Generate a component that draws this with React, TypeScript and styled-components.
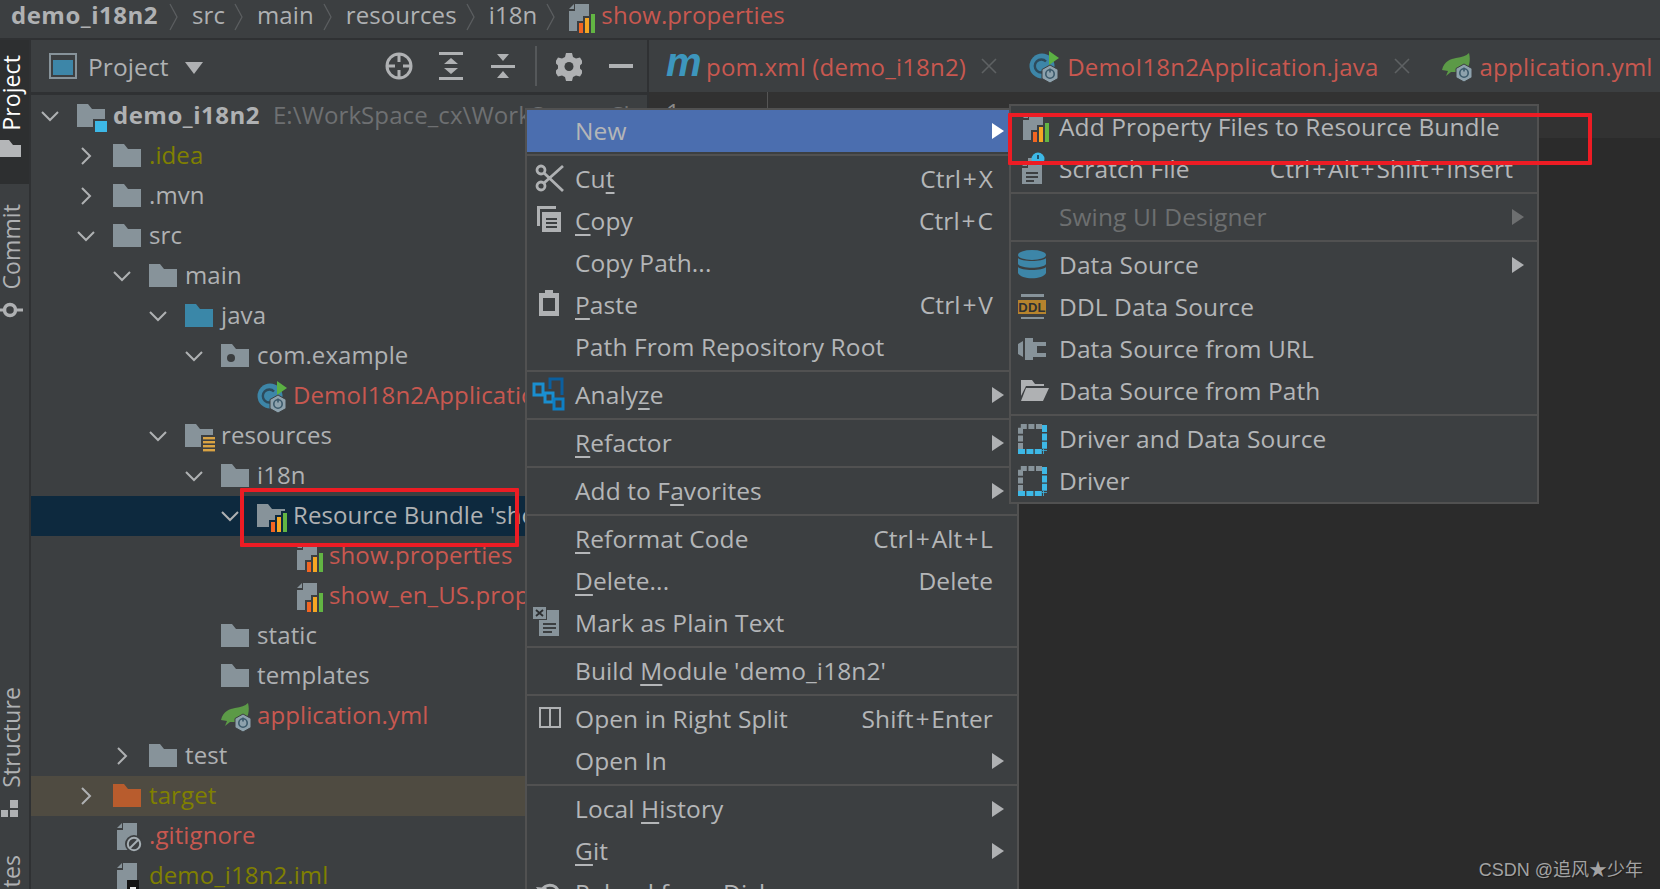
import React from 'react';
import styled, { createGlobalStyle } from 'styled-components';

const GlobalStyle = createGlobalStyle`
  html, body {
    margin: 0;
    padding: 0;
    background: #2b2b2b;
  }
  * {
    box-sizing: border-box;
  }
`;

const UI_FONT = `"Open Sans", "Noto Sans", sans-serif`;
const TEXT = '#afb1b3';
const RED = '#c85850';
const OLIVE = '#808000';
const BAR = '#3c3f41';
const LINE = '#2f3133';
const GREY_ICON = '#87939a';

// Shell
const Window = styled.div`
  position: relative;
  width: 1660px;
  height: 889px;
  overflow: hidden;
  display: flex;
  flex-direction: column;
  background: ${BAR};
  color: ${TEXT};
  font-family: ${UI_FONT};
  font-size: 24.5px;
  letter-spacing: 0.1px;
`;

const Crumbs = styled.div`
  flex: none;
  height: 40px;
  display: flex;
  align-items: center;
  padding: 0 0 5px 11px;
  border-bottom: 2px solid ${LINE};
  font-size: 24px;
`;

const Crumb = styled.span<{ $bold?: boolean; $red?: boolean }>`
  font-weight: ${p => (p.$bold ? 700 : 400)};
  letter-spacing: ${p => (p.$bold ? '0.5px' : '0.1px')};
  margin-right: ${p => (p.$bold ? 2 : 0)}px;
  color: ${p => (p.$red ? RED : TEXT)};
  white-space: nowrap;
  padding-bottom: 5px;
`;

const CrumbSep = styled.svg`
  flex: none;
  width: 9px;
  height: 34px;
  margin: 0 14px 0 9px;
`;

const CrumbIcon = styled.span`
  flex: none;
  display: flex;
  margin: 0 4px 0 -4px;
`;

const Body = styled.div`
  flex: 1;
  min-height: 0;
  display: flex;
`;

// Left tool strip
const Strip = styled.div`
  flex: none;
  width: 31px;
  display: flex;
  flex-direction: column;
  align-items: flex-start;
  overflow: hidden;
  border-right: 2px solid ${LINE};
`;

const StripActive = styled.div`
  flex: none;
  width: 29px;
  height: 144px;
  padding-top: 15px;
  background: #2d2f30;
  display: flex;
  flex-direction: column;
  align-items: flex-start;
`;

const StripLabel = styled.span<{ $active?: boolean; $top?: number }>`
  flex: none;
  width: 22px;
  margin-top: ${p => p.$top ?? 0}px;
  writing-mode: vertical-rl;
  transform: rotate(180deg);
  white-space: nowrap;
  line-height: 22px;
  font-size: 23px;
  color: ${p => (p.$active ? '#ffffff' : TEXT)};
`;

const StripIcon = styled.svg<{ $top: number }>`
  flex: none;
  width: 26px;
  height: 22px;
  margin-top: ${p => p.$top}px;
`;

// Project panel
const Panel = styled.div`
  flex: none;
  width: 618px;
  display: flex;
  flex-direction: column;
  border-right: 2px solid ${LINE};
  overflow: hidden;
`;

const PanelBar = styled.div`
  flex: none;
  height: 55px;
  padding: 0 14px 0 18px;
  display: flex;
  align-items: center;
  border-bottom: 3px solid ${LINE};
`;

const PanelTitle = styled.span`
  margin: 0 0 0 11px;
`;

const ToolIcon = styled.svg<{ $gap: number; $w: number }>`
  flex: none;
  width: ${p => p.$w}px;
  height: 30px;
  margin-left: ${p => p.$gap}px;
`;

const ToolDivider = styled.span`
  flex: none;
  width: 2px;
  height: 40px;
  margin-left: 20px;
  background: #55585a;
`;

const Tree = styled.div`
  flex: 1;
  padding-top: 1px;
  font-size: 24px;
`;

const Row = styled.div<{ $level: number; $tone?: 'selected' | 'ignored' }>`
  height: 40px;
  display: flex;
  align-items: center;
  padding-left: ${p => p.$level * 36}px;
  background: ${p =>
    p.$tone === 'selected' ? '#0d293e' : p.$tone === 'ignored' ? '#4f4b41' : 'transparent'};
  white-space: nowrap;
`;

const ArrowSlot = styled.span`
  flex: none;
  width: 46px;
  padding-left: 11px;
  display: flex;
  align-items: center;
`;

const IconSlot = styled.span`
  flex: none;
  width: 36px;
  height: 26px;
  display: flex;
`;

const RowText = styled.span<{ $color?: string; $bold?: boolean }>`
  color: ${p => p.$color ?? TEXT};
  font-weight: ${p => (p.$bold ? 700 : 400)};
  letter-spacing: ${p => (p.$bold ? '0.5px' : '0.1px')};
  padding-bottom: 3px;
`;

const RowHint = styled.span`
  margin-left: 13px;
  color: #6e7072;
  padding-bottom: 3px;
`;

const Svg = styled.svg`
  display: block;
  flex: none;
  overflow: visible;
`;

// Editor
const Editor = styled.div`
  flex: 1;
  min-width: 0;
  display: flex;
  flex-direction: column;
`;

const TabBar = styled.div`
  flex: none;
  height: 52px;
  padding: 0 0 0 17px;
  display: flex;
  align-items: center;
  white-space: nowrap;
  font-size: 24px;
`;

const Tab = styled.div`
  flex: none;
  display: flex;
  align-items: center;
  margin-right: 32px;
`;

const MavenMark = styled.span`
  width: 40px;
  font-family: "Liberation Sans", sans-serif;
  font-size: 40px;
  line-height: 40px;
  font-weight: 700;
  font-style: italic;
  color: #3d96bd;
  padding-bottom: 8px;
`;

const TabIconSlot = styled.span`
  flex: none;
  width: 38px;
  display: flex;
`;

const TabName = styled.span`
  color: ${RED};
  letter-spacing: 0.2px;
`;

const TabClose = styled.svg`
  flex: none;
  width: 16px;
  height: 16px;
  margin-left: 15px;
`;

const EditorPane = styled.div`
  flex: 1;
  display: flex;
  background: #2b2b2b;
`;

const Gutter = styled.div`
  flex: none;
  width: 119px;
  background: #313131;
  border-right: 1px solid #555555;
  padding: 0 0 0 17px;
  color: #8a8a8a;
  line-height: 40px;
  height: 100%;
`;

const CurrentLine = styled.div`
  flex: 1;
  height: 46px;
  background: #323232;
`;

// Context menus
const Menu = styled.div<{ $left: number; $top: number; $width: number; $z: number }>`
  position: absolute;
  left: ${p => p.$left}px;
  top: ${p => p.$top}px;
  width: ${p => p.$width}px;
  z-index: ${p => p.$z};
  background: ${BAR};
  border: 2px solid #515151;
`;

const Item = styled.div<{ $active?: boolean; $slot: number; $disabled?: boolean }>`
  height: 42px;
  display: flex;
  align-items: center;
  padding-right: 13px;
  background: ${p => (p.$active ? '#4b6eaf' : 'transparent')};
  color: ${p => (p.$disabled ? '#6d6f70' : '#b4b6b8')};
  white-space: nowrap;

  & > span:first-child {
    width: ${p => p.$slot}px;
  }
`;

const ItemIcon = styled.span`
  flex: none;
  height: 30px;
  padding-left: 5px;
  display: flex;
`;

const ItemLabel = styled.span`
  flex: 1;
  padding-bottom: 1px;
`;

const Mnemonic = styled.span`
  text-decoration: underline;
  text-decoration-thickness: 2px;
  text-underline-offset: 4px;
`;

const Shortcut = styled.span`
  margin-right: 11px;
  padding-bottom: 1px;
`;

const Plus = styled.span`
  padding: 0 1.8px;
`;

const SubArrow = styled.span<{ $color: string }>`
  flex: none;
  width: 0;
  height: 0;
  border-style: solid;
  border-width: 8px 0 8px 12px;
  border-color: transparent transparent transparent ${p => p.$color};
`;

const Divider = styled.div`
  height: 6px;
  display: flex;
  align-items: center;

  &::after {
    content: '';
    flex: 1;
    height: 2px;
    background: #515151;
  }
`;

// Overlays
const Callout = styled.div<{ $left: number; $top: number; $width: number; $height: number }>`
  position: absolute;
  left: ${p => p.$left}px;
  top: ${p => p.$top}px;
  width: ${p => p.$width}px;
  height: ${p => p.$height}px;
  z-index: 5;
  border: 4px solid #ed1c24;
  border-radius: 1px;
`;

const Watermark = styled.div`
  position: absolute;
  right: 17px;
  top: 860px;
  z-index: 6;
  font-family: "Liberation Sans", "Noto Sans CJK SC", sans-serif;
  font-size: 18px;
  letter-spacing: 0;
  line-height: 20px;
  color: #a3a3a3;
  text-shadow: 1px 1px 1px #1c1c1c;
`;

// Icons
const FolderShape = ({ color }: { color: string }) => (
  <path d="M0 1h11l4 5h13v18H0z" fill={color} />
);

const Bars = () => (
  <>
    <rect x="14" y="19" width="4" height="10" fill="#f26522" />
    <rect x="20" y="14" width="4" height="15" fill="#f5a623" />
    <rect x="26" y="10" width="4" height="19" fill="#62b543" />
  </>
);

const PageShape = () => (
  <>
    <path d="M10 0h14v27H4V7h6z" fill={GREY_ICON} />
    <path d="M4 5l5-5v5z" fill={GREY_ICON} />
  </>
);

const BootGear = ({ x = 21, y = 21 }: { x?: number; y?: number }) => (
  <g transform={`translate(${x} ${y})`}>
    <path d="M0-9l8 4.5v9L0 9l-8-4.5v-9z" fill="#8ea2ad" stroke={BAR} strokeWidth="1" />
    <circle r="4.2" fill="none" stroke="#3c5a6b" strokeWidth="1.6" />
    <path d="M0-5.5v4" stroke="#3c5a6b" strokeWidth="1.6" />
  </g>
);

const ICON_SIZE = { width: 32, height: 26, viewBox: '0 0 32 26' };

const Folder = ({ color = GREY_ICON }: { color?: string }) => (
  <Svg {...ICON_SIZE}><FolderShape color={color} /></Svg>
);

const ModuleFolder = () => (
  <Svg {...ICON_SIZE}>
    <FolderShape color={GREY_ICON} />
    <rect x="16" y="16" width="15" height="14" fill={BAR} />
    <rect x="18" y="18" width="12" height="11" fill="#3db8e6" />
  </Svg>
);

const PackageFolder = () => (
  <Svg {...ICON_SIZE}>
    <FolderShape color={GREY_ICON} />
    <circle cx="10" cy="15" r="4" fill="#3a3d3f" />
  </Svg>
);

const ResourceFolder = () => (
  <Svg {...ICON_SIZE}>
    <FolderShape color={GREY_ICON} />
    <rect x="16" y="12" width="15" height="18" fill={BAR} />
    {[14, 18, 22, 26].map(y => (
      <rect key={y} x="18" y={y} width="12" height="2.4" fill="#d9a343" />
    ))}
  </Svg>
);

const BundleFolder = () => (
  <Svg {...ICON_SIZE}>
    <FolderShape color={GREY_ICON} />
    <path d="M12 30V17h6v-5h6V8h7v22z" fill="#0d293e" />
    <Bars />
  </Svg>
);

const PropertyFile = ({ viewBox = '0 0 32 26' }: { viewBox?: string }) => (
  <Svg width={32} height={26} viewBox={viewBox}>
    <PageShape />
    <path d="M12 30V17h6v-5h6V8h7v22z" fill={BAR} />
    <Bars />
  </Svg>
);

const BootClass = () => (
  <Svg {...ICON_SIZE}>
    <circle cx="13" cy="13" r="12.5" fill="#3d86a8" />
    <path d="M17 8.5a6.5 6.5 0 1 0 0 9" fill="none" stroke="#2d4b5c" strokeWidth="2.4" />
    <path d="M20-2l10 7-10 7z" fill="#5bb043" />
    <BootGear />
  </Svg>
);

const SpringYaml = () => (
  <Svg {...ICON_SIZE}>
    <path d="M0 17C2 8 9 6 14 5c6-1 10-2 13-5 2 8 0 14-4 19H9l-5 4 2-5z" fill="#5c9a47" />
    <BootGear x={22} y={20} />
  </Svg>
);

const IgnoreFile = () => (
  <Svg {...ICON_SIZE}>
    <PageShape />
    <circle cx="21" cy="21" r="9" fill={BAR} />
    <circle cx="21" cy="21" r="6.2" fill="none" stroke="#a5aeb3" strokeWidth="2" />
    <path d="M17 25l8-8" stroke="#a5aeb3" strokeWidth="2" />
  </Svg>
);

const ModuleFile = () => (
  <Svg {...ICON_SIZE}>
    <PageShape />
    <rect x="14" y="17" width="12" height="14" fill="#141414" />
    <rect x="17" y="24" width="6" height="3" fill="#e8e8e8" />
  </Svg>
);

const Chevron = ({ open }: { open?: boolean }) => (
  <Svg width={16} height={16} viewBox="0 0 16 16">
    <path
      d={open ? 'M0 4l8 8 8-8' : 'M4 0l8 8-8 8'}
      fill="none"
      stroke={TEXT}
      strokeWidth="2"
    />
  </Svg>
);

const MENU_ICON = { width: 34, height: 30, viewBox: '0 0 34 30' };

const ScissorsIcon = () => (
  <Svg {...MENU_ICON}>
    <g fill="none" stroke={TEXT} strokeWidth="2.8">
      <circle cx="9" cy="6" r="4" />
      <circle cx="9" cy="22" r="4" />
      <path d="M12 9l19 18M12 19L31 2" />
    </g>
  </Svg>
);

const CopyIcon = () => (
  <Svg {...MENU_ICON}>
    <path d="M5 0h19v3H8v17H5z" fill={TEXT} />
    <rect x="10" y="6" width="19" height="20" fill={TEXT} />
    <path d="M14 12h11v2H14zM14 16h11v2H14zM14 20h11v2H14z" fill={BAR} />
  </Svg>
);

const PasteIcon = () => (
  <Svg {...MENU_ICON}>
    <path d="M13 0h8v3h6v23H7V3h6zM11 8v13h12V8z" fill={TEXT} fillRule="evenodd" />
  </Svg>
);

const AnalyzeIcon = () => (
  <Svg {...MENU_ICON}>
    <g fill="none" strokeWidth="3">
      <rect x="2" y="4" width="9" height="11" stroke="#1a8fd0" />
      <rect x="13" y="13" width="8" height="9" stroke="#1a8fd0" />
      <rect x="22" y="19" width="9" height="10" stroke="#0e7fc4" />
      <path d="M18 9V-1h12v16" stroke="#0b5f9e" />
    </g>
  </Svg>
);

const PlainTextIcon = () => (
  <Svg {...MENU_ICON}>
    <rect x="7" y="2" width="20" height="26" fill={GREY_ICON} />
    <path d="M11 15h13v2H11zM11 19h13v2H11zM11 23h9v2H11z" fill={BAR} />
    <rect x="0" y="-2" width="15" height="14" fill={BAR} />
    <rect x="1" y="-1" width="13" height="12" fill={GREY_ICON} />
    <path d="M4 2l7 6M11 2L4 8" stroke="#2c2e30" strokeWidth="1.8" />
  </Svg>
);

const SplitIcon = () => (
  <Svg {...MENU_ICON}>
    <path d="M8 4h20v19H8zM18 4v19" fill="none" stroke={TEXT} strokeWidth="2" />
  </Svg>
);

const ReloadIcon = () => (
  <Svg {...MENU_ICON}>
    <path d="M9 15a9 9 0 1 1 3 8" fill="none" stroke={TEXT} strokeWidth="3" />
    <path d="M4 9l5 8 6-7z" fill={TEXT} />
  </Svg>
);

const ScratchIcon = () => (
  <Svg {...MENU_ICON}>
    <path d="M6 12l5-5v5zM12 4h14v26H6V14h6z" fill={GREY_ICON} />
    <path d="M10 18h12v2H10zM10 22h12v2H10zM10 26h8v2H10z" fill={BAR} />
    <circle cx="22" cy="5" r="6.5" fill="#3db8e6" />
    <path d="M22 1v4" stroke="#20506a" strokeWidth="2" />
  </Svg>
);

const DatabaseIcon = () => (
  <Svg {...MENU_ICON}>
    <g fill="#3d86a8">
      <ellipse cx="16" cy="5" rx="14" ry="5" />
      <path d="M2 8c3 4 25 4 28 0v6c-3 5-25 5-28 0z" />
      <path d="M2 17c3 4 25 4 28 0v6c-3 7-25 7-28 0z" />
    </g>
  </Svg>
);

const DdlIcon = () => (
  <Svg {...MENU_ICON}>
    <path d="M5 2h23v3H5zM5 25h23v2H5z" fill={GREY_ICON} />
    <rect x="2" y="8" width="28" height="14" fill="#b5832d" />
    <text
      x="16"
      y="20"
      textAnchor="middle"
      fontFamily="'Liberation Sans', sans-serif"
      fontWeight="700"
      fontSize="13"
      letterSpacing="0.3"
      fill="#2f3133"
    >
      DDL
    </text>
  </Svg>
);

const PlugIcon = () => (
  <Svg {...MENU_ICON}>
    <path d="M2 10l5-3v16l-5-3zM9 4h8v22H9z" fill={GREY_ICON} />
    <path d="M19 8h11v4H19zM19 19h11v4H19z" fill={GREY_ICON} />
    <rect x="17" y="8" width="4" height="15" fill={GREY_ICON} />
  </Svg>
);

const OpenFolderIcon = () => (
  <Svg {...MENU_ICON}>
    <path d="M5 4h11l3 4h9v2H10L5 20z" fill={TEXT} />
    <path d="M10 12h23l-6 13H5z" fill={TEXT} />
  </Svg>
);

const DriverIcon = () => (
  <Svg {...MENU_ICON}>
    <g fill="none" strokeWidth="5">
      <path d="M4.5 25V2.5H27" stroke={GREY_ICON} strokeDasharray="6 1.6" />
      <path d="M28.5 1v26M2 27.5h26" stroke="#3db8e6" strokeDasharray="7 1.4" />
    </g>
  </Svg>
);

// Data
type TreeRow = {
  level: number;
  open?: boolean;
  icon: React.ReactNode;
  label: string;
  color?: string;
  bold?: boolean;
  hint?: string;
  tone?: 'selected' | 'ignored';
};

const treeRows: TreeRow[] = [
  { level: 0, open: true, icon: <ModuleFolder />, label: 'demo_i18n2', bold: true, hint: 'E:\\WorkSpace_cx\\WorkSpace_Cloud\\demo' },
  { level: 1, open: false, icon: <Folder />, label: '.idea', color: OLIVE },
  { level: 1, open: false, icon: <Folder />, label: '.mvn' },
  { level: 1, open: true, icon: <Folder />, label: 'src' },
  { level: 2, open: true, icon: <Folder />, label: 'main' },
  { level: 3, open: true, icon: <Folder color="#3a87a8" />, label: 'java' },
  { level: 4, open: true, icon: <PackageFolder />, label: 'com.example' },
  { level: 5, icon: <BootClass />, label: 'DemoI18n2Application', color: RED },
  { level: 3, open: true, icon: <ResourceFolder />, label: 'resources' },
  { level: 4, open: true, icon: <Folder />, label: 'i18n' },
  { level: 5, open: true, icon: <BundleFolder />, label: "Resource Bundle 'show'", tone: 'selected' },
  { level: 6, icon: <PropertyFile />, label: 'show.properties', color: RED },
  { level: 6, icon: <PropertyFile />, label: 'show_en_US.properties', color: RED },
  { level: 4, icon: <Folder />, label: 'static' },
  { level: 4, icon: <Folder />, label: 'templates' },
  { level: 4, icon: <SpringYaml />, label: 'application.yml', color: RED },
  { level: 2, open: false, icon: <Folder />, label: 'test' },
  { level: 1, open: false, icon: <Folder color="#b85c2d" />, label: 'target', color: OLIVE, tone: 'ignored' },
  { level: 1, icon: <IgnoreFile />, label: '.gitignore', color: RED },
  { level: 1, icon: <ModuleFile />, label: 'demo_i18n2.iml', color: OLIVE },
];

type MenuEntry =
  | 'divider'
  | {
      label: string;
      mnemonic?: number;
      icon?: React.ReactNode;
      shortcut?: string;
      arrow?: boolean;
      active?: boolean;
      disabled?: boolean;
    };

const mainMenu: MenuEntry[] = [
  { label: 'New', arrow: true, active: true },
  'divider',
  { label: 'Cut', mnemonic: 2, icon: <ScissorsIcon />, shortcut: 'Ctrl+X' },
  { label: 'Copy', mnemonic: 0, icon: <CopyIcon />, shortcut: 'Ctrl+C' },
  { label: 'Copy Path...' },
  { label: 'Paste', mnemonic: 0, icon: <PasteIcon />, shortcut: 'Ctrl+V' },
  { label: 'Path From Repository Root' },
  'divider',
  { label: 'Analyze', mnemonic: 5, icon: <AnalyzeIcon />, arrow: true },
  'divider',
  { label: 'Refactor', mnemonic: 0, arrow: true },
  'divider',
  { label: 'Add to Favorites', mnemonic: 8, arrow: true },
  'divider',
  { label: 'Reformat Code', mnemonic: 0, shortcut: 'Ctrl+Alt+L' },
  { label: 'Delete...', mnemonic: 0, shortcut: 'Delete' },
  { label: 'Mark as Plain Text', icon: <PlainTextIcon /> },
  'divider',
  { label: "Build Module 'demo_i18n2'", mnemonic: 6 },
  'divider',
  { label: 'Open in Right Split', icon: <SplitIcon />, shortcut: 'Shift+Enter' },
  { label: 'Open In', arrow: true },
  'divider',
  { label: 'Local History', mnemonic: 6, arrow: true },
  { label: 'Git', mnemonic: 0, arrow: true },
  { label: 'Reload from Disk', icon: <ReloadIcon /> },
];

const subMenu: MenuEntry[] = [
  { label: 'Add Property Files to Resource Bundle', icon: <PropertyFile viewBox="-3 -1 32 26" /> },
  { label: 'Scratch File', icon: <ScratchIcon />, shortcut: 'Ctrl+Alt+Shift+Insert' },
  'divider',
  { label: 'Swing UI Designer', arrow: true, disabled: true },
  'divider',
  { label: 'Data Source', icon: <DatabaseIcon />, arrow: true },
  { label: 'DDL Data Source', icon: <DdlIcon /> },
  { label: 'Data Source from URL', icon: <PlugIcon /> },
  { label: 'Data Source from Path', icon: <OpenFolderIcon /> },
  'divider',
  { label: 'Driver and Data Source', icon: <DriverIcon /> },
  { label: 'Driver', icon: <DriverIcon /> },
];

const crumbs = ['demo_i18n2', 'src', 'main', 'resources', 'i18n'];

const MenuList = ({ entries, slot }: { entries: MenuEntry[]; slot: number }) => (
  <>
    {entries.map((entry, i) => {
      if (entry === 'divider') return <Divider key={i} />;
      const { label, mnemonic, icon, shortcut, arrow, active, disabled } = entry;
      return (
        <Item key={i} $active={active} $slot={slot} $disabled={disabled}>
          <ItemIcon>{icon}</ItemIcon>
          <ItemLabel>
            {mnemonic === undefined ? (
              label
            ) : (
              <>
                {label.slice(0, mnemonic)}
                <Mnemonic>{label[mnemonic]}</Mnemonic>
                {label.slice(mnemonic + 1)}
              </>
            )}
          </ItemLabel>
          {shortcut && (
            <Shortcut>
              {shortcut.split('+').map((key, k) => (
                <React.Fragment key={key}>
                  {k > 0 && <Plus>+</Plus>}
                  {key}
                </React.Fragment>
              ))}
            </Shortcut>
          )}
          {arrow && (
            <SubArrow $color={active ? '#ffffff' : disabled ? '#6d6f70' : TEXT} />
          )}
        </Item>
      );
    })}
  </>
);

const CloseMark = () => (
  <TabClose viewBox="0 0 16 16">
    <path d="M1 1l14 14M15 1L1 15" stroke="#5e6163" strokeWidth="1.6" />
  </TabClose>
);

const App: React.FC = () => {
  return (
    <Window>
      <GlobalStyle />
      <Crumbs>
        {crumbs.map((name, i) => (
          <React.Fragment key={name}>
            <Crumb $bold={i === 0}>{name}</Crumb>
            <CrumbSep viewBox="0 0 9 34">
              <path d="M1 4l7 13-7 13" fill="none" stroke="#5b5e60" strokeWidth="1.3" />
            </CrumbSep>
          </React.Fragment>
        ))}
        <CrumbIcon><PropertyFile /></CrumbIcon>
        <Crumb $red>show.properties</Crumb>
      </Crumbs>

      <Body>
        <Strip>
          <StripActive>
            <StripLabel $active>Project</StripLabel>
            <StripIcon $top={8} viewBox="0 0 26 22">
              <path d="M0 1h9l4 5h8v12H0z" fill="#b4b6b8" />
            </StripIcon>
          </StripActive>
          <StripLabel $top={20}>Commit</StripLabel>
          <StripIcon $top={9} viewBox="0 0 26 22">
            <circle cx="10" cy="11" r="5.5" fill="none" stroke={TEXT} strokeWidth="3.5" />
            <path d="M0 11h3M17 11h6" stroke={TEXT} strokeWidth="3" />
          </StripIcon>
          <StripLabel $top={366}>Structure</StripLabel>
          <StripIcon $top={12} viewBox="0 0 26 22">
            <path d="M10 1h8v8h-8zM1 11h7v7H1zM10 11h8v7h-8z" fill={TEXT} />
          </StripIcon>
          <StripLabel $top={34}>tes</StripLabel>
        </Strip>

        <Panel>
          <PanelBar>
            <Svg width={28} height={26} viewBox="0 0 28 26">
              <rect x="1" y="1" width="26" height="24" fill="none" stroke={GREY_ICON} strokeWidth="2" />
              <rect x="4" y="7" width="20" height="15" fill="#3d86a8" />
            </Svg>
            <PanelTitle>Project</PanelTitle>
            <ToolIcon $gap={16} $w={18} viewBox="0 0 18 30">
              <path d="M0 11h18l-9 12z" fill={TEXT} />
            </ToolIcon>
            <ToolIcon $gap={182} $w={28} viewBox="0 0 28 30">
              <circle cx="14" cy="15" r="12" fill="none" stroke={TEXT} strokeWidth="3" />
              <path d="M14 3v8M14 19v8M2 15h8M18 15h8" stroke={TEXT} strokeWidth="3" />
            </ToolIcon>
            <ToolIcon $gap={26} $w={24} viewBox="0 0 24 30">
              <path d="M0 1h24v3H0zM0 26h24v3H0zM12 7l7 6H5zM5 17h14l-7 6z" fill={TEXT} />
            </ToolIcon>
            <ToolIcon $gap={28} $w={24} viewBox="0 0 24 30">
              <path d="M0 14h24v3H0zM6 3h12l-6 7zM12 20l6 7H6z" fill={TEXT} />
            </ToolIcon>
            <ToolDivider />
            <ToolIcon $gap={19} $w={26} viewBox="0 0 26 30">
              <path
                d="M10 2h6l1 4 3 1.5 4-1 3 5-3 3v3l3 3-3 5-4-1-3 1.5-1 4h-6l-1-4-3-1.5-4 1-3-5 3-3v-3l-3-3 3-5 4 1L9 6z"
                fill={TEXT}
              />
              <circle cx="13" cy="15.5" r="4.5" fill={BAR} />
            </ToolIcon>
            <ToolIcon $gap={27} $w={24} viewBox="0 0 24 30">
              <rect y="13" width="24" height="4" fill={TEXT} />
            </ToolIcon>
          </PanelBar>
          <Tree>
            {treeRows.map(row => (
              <Row key={row.label} $level={row.level} $tone={row.tone}>
                <ArrowSlot>
                  {row.open !== undefined && <Chevron open={row.open} />}
                </ArrowSlot>
                <IconSlot>{row.icon}</IconSlot>
                <RowText $color={row.color} $bold={row.bold}>{row.label}</RowText>
                {row.hint && <RowHint>{row.hint}</RowHint>}
              </Row>
            ))}
          </Tree>
        </Panel>

        <Editor>
          <TabBar>
            <Tab>
              <MavenMark>m</MavenMark>
              <TabName>pom.xml (demo_i18n2)</TabName>
              <CloseMark />
            </Tab>
            <Tab>
              <TabIconSlot><BootClass /></TabIconSlot>
              <TabName>DemoI18n2Application.java</TabName>
              <CloseMark />
            </Tab>
            <Tab>
              <TabIconSlot><SpringYaml /></TabIconSlot>
              <TabName>application.yml</TabName>
            </Tab>
          </TabBar>
          <EditorPane>
            <Gutter>1</Gutter>
            <CurrentLine />
          </EditorPane>
        </Editor>
      </Body>

      <Menu $left={525} $top={108} $width={494} $z={2}>
        <MenuList entries={mainMenu} slot={48} />
      </Menu>
      <Menu $left={1009} $top={104} $width={530} $z={3}>
        <MenuList entries={subMenu} slot={48} />
      </Menu>

      <Callout $left={240} $top={488} $width={279} $height={59} />
      <Callout $left={1008} $top={113} $width={584} $height={52} />
      <Watermark>CSDN @追风★少年</Watermark>
    </Window>
  );
};

export default App;
